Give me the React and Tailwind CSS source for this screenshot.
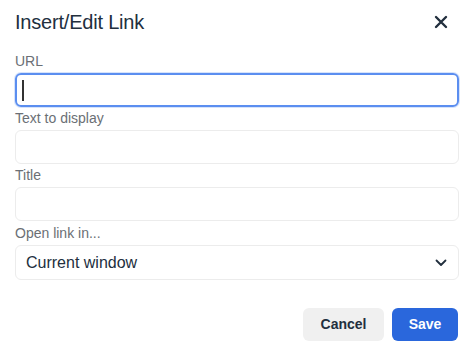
import React from "react";

function Field({ label, children }) {
  return (
    <div className="flex flex-col">
      <label className="text-[14px] leading-[18px] text-[#6b6f75] mb-[3px]">{label}</label>
      {children}
    </div>
  );
}

export default function App() {
  return (
    <div
      className="w-[474px] h-[349px] bg-white overflow-hidden rounded-b-[8px]"
      style={{ fontFamily: '"Liberation Sans", Arial, sans-serif' }}
    >
      <div className="flex items-center justify-between pl-[15px] pr-[26px] h-[44px]">
        <h1 className="text-[20px] leading-[24px] text-[#222f3e] tracking-[-0.2px]">Insert/Edit Link</h1>
        <svg width="14" height="14" viewBox="0 0 14 14" className="text-[#222f3e]">
          <path d="M2 2 L12 12 M12 2 L2 12" stroke="currentColor" strokeWidth="2.4" strokeLinecap="round" />
        </svg>
      </div>
      <div className="flex flex-col gap-[2px] px-[15px] pt-[8px]">
        <Field label="URL">
          <div className="h-[34px] rounded-[6px] border-2 border-[#5b8ef0] shadow-[0_0_0_1px_rgba(91,142,240,0.25)] flex items-center pl-[5px]">
            <span className="w-[1.5px] h-[21px] bg-[#333]"></span>
          </div>
        </Field>
        <Field label="Text to display">
          <div className="h-[34px] rounded-[6px] border border-[#ececec]"></div>
        </Field>
        <Field label="Title">
          <div className="h-[34px] rounded-[6px] border border-[#ececec]"></div>
        </Field>
        <div className="flex flex-col mt-[1px]">
          <label className="text-[14px] leading-[18px] text-[#6b6f75] mb-[3px]">Open link in...</label>
          <div className="h-[35px] rounded-[6px] border border-[#ececec] flex items-center justify-between pl-[10px] pr-[11px]">
            <span className="text-[16px] text-[#222f3e]">Current window</span>
            <svg width="12" height="8" viewBox="0 0 12 8" className="text-[#222f3e]">
              <path d="M1.5 1.5 L6 6 L10.5 1.5" stroke="currentColor" strokeWidth="1.8" fill="none" strokeLinecap="round" strokeLinejoin="round" />
            </svg>
          </div>
        </div>
      </div>
      <div className="flex justify-end gap-[8px] px-[16px] mt-[28px]">
        <button className="w-[81px] h-[33px] rounded-[6px] bg-[#f0f0f0] text-[#222f3e] text-[14px] font-bold">Cancel</button>
        <button className="w-[66px] h-[33px] rounded-[6px] bg-[#2a67dc] text-white text-[14px] font-bold">Save</button>
      </div>
    </div>
  );
}
